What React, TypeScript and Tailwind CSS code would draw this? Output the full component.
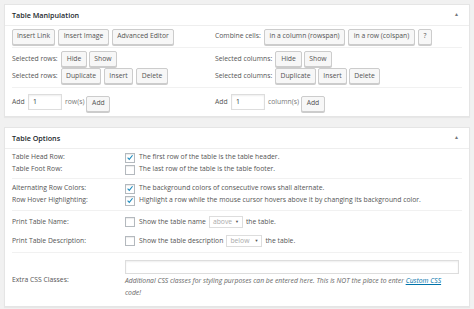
import React from 'react';

const Btn = ({ children, w }: { children: React.ReactNode; w?: string }) => (
  <span
    className={`inline-flex h-[16px] items-center justify-center whitespace-nowrap rounded-[2px] border border-[#cccccc] bg-[#f7f7f7] px-[2px] text-[6.8px] text-[#555] shadow-[0_1px_0_#cccccc] ${w ?? ''}`}
  >
    {children}
  </span>
);

const Check = ({ on }: { on?: boolean }) => (
  <span className="inline-flex h-[10px] w-[10px] shrink-0 items-center justify-center border border-[#b4b9be] bg-white shadow-[inset_0_1px_1px_rgba(0,0,0,0.08)]">
    {on && (
      <svg viewBox="0 0 10 10" className="h-[9px] w-[9px]">
        <path d="M2 5.2 L4.1 7.4 L8.2 2.2" fill="none" stroke="#1e8cbe" strokeWidth="1.4" />
      </svg>
    )}
  </span>
);

const Select = ({ value, w }: { value: string; w: string }) => (
  <span className={`mx-[3px] inline-flex h-[12px] items-center justify-between border border-[#dddddd] bg-white px-[3px] text-[#aaa] ${w}`}>
    <span>{value}</span>
    <span className="text-[4px] text-[#555]">▼</span>
  </span>
);

const Header = ({ title, h }: { title: string; h: string }) => (
  <div className={`flex items-center justify-between border-b border-[#eeeeee] px-[7px] ${h}`}>
    <span className="text-[7.2px] font-semibold text-[#23282d]">{title}</span>
    <span className="pr-[3px] text-[5px] text-[#72777c]">▲</span>
  </div>
);

const OptRow = ({ label, children }: { label: string; children: React.ReactNode }) => (
  <div className="grid h-[12px] grid-cols-[113px_1fr] items-center whitespace-nowrap">
    <span>{label}</span>
    <div className="flex items-center">{children}</div>
  </div>
);

const AddBox = ({ unit }: { unit: string }) => (
  <div className="flex items-center whitespace-nowrap">
    <span className="w-[16px]">Add</span>
    <span className="flex h-[16px] w-[34px] items-center border border-[#dddddd] pl-[4px] text-[#32373c] shadow-[inset_0_1px_2px_rgba(0,0,0,0.07)]">
      1
    </span>
    <span className="ml-[3px] mr-[2px] text-[#777]">{unit}</span>
    <span className="mt-[3px]">
      <Btn w="w-[24px]">Add</Btn>
    </span>
  </div>
);

export default function App() {
  return (
    <div
      className="min-h-screen bg-[#f1f1f1] pl-[4px] pt-[4px] text-[6.8px] text-[#555]"
      style={{ fontFamily: '"Open Sans", "Noto Sans", sans-serif' }}
    >
      {/* Table Manipulation */}
      <div className="w-[466px] border border-[#e5e5e5] bg-white shadow-[0_1px_1px_rgba(0,0,0,0.04)]">
        <Header title="Table Manipulation" h="h-[21px]" />
        <div className="px-[7px]">
          <div className="grid h-[22px] grid-cols-[203px_1fr] items-center whitespace-nowrap border-b border-[#f1f1f1]">
            <div className="flex gap-[3px]">
              <Btn w="w-[43px]">Insert Link</Btn>
              <Btn w="w-[51px]">Insert Image</Btn>
              <Btn w="w-[62px]">Advanced Editor</Btn>
            </div>
            <div className="flex items-center">
              <span className="w-[49px]">Combine cells:</span>
              <div className="flex gap-[3px]">
                <Btn w="w-[81px]">in a column (rowspan)</Btn>
                <Btn w="w-[67px]">in a row (colspan)</Btn>
                <Btn w="w-[14px]">?</Btn>
              </div>
            </div>
          </div>
          <div className="flex h-[40px] flex-col justify-center gap-[1px] whitespace-nowrap border-b border-[#f1f1f1]">
            <div className="grid grid-cols-[203px_1fr] items-center">
              <div className="flex items-center">
                <span className="w-[49px]">Selected rows:</span>
                <div className="flex gap-[2px]">
                  <Btn w="w-[26px]">Hide</Btn>
                  <Btn w="w-[28px]">Show</Btn>
                </div>
              </div>
              <div className="flex items-center">
                <span className="w-[60px]">Selected columns:</span>
                <div className="flex gap-[2px]">
                  <Btn w="w-[27px]">Hide</Btn>
                  <Btn w="w-[28px]">Show</Btn>
                </div>
              </div>
            </div>
            <div className="grid grid-cols-[203px_1fr] items-center">
              <div className="flex items-center">
                <span className="w-[49px]">Selected rows:</span>
                <div className="flex gap-[3px]">
                  <Btn w="w-[40px]">Duplicate</Btn>
                  <Btn w="w-[29px]">Insert</Btn>
                  <Btn w="w-[32px]">Delete</Btn>
                </div>
              </div>
              <div className="flex items-center">
                <span className="w-[60px]">Selected columns:</span>
                <div className="flex gap-[2px]">
                  <Btn w="w-[41px]">Duplicate</Btn>
                  <Btn w="w-[29px]">Insert</Btn>
                  <Btn w="w-[31px]">Delete</Btn>
                </div>
              </div>
            </div>
          </div>
          <div className="grid h-[28px] grid-cols-[203px_1fr] items-center">
            <AddBox unit="row(s)" />
            <AddBox unit="column(s)" />
          </div>
        </div>
      </div>

      {/* Table Options */}
      <div className="mt-[10px] w-[466px] border border-[#e5e5e5] bg-white shadow-[0_1px_1px_rgba(0,0,0,0.04)]">
        <Header title="Table Options" h="h-[21px]" />
        <div className="px-[7px]">
          <div className="flex h-[30px] flex-col justify-center border-b border-[#f1f1f1]">
            <OptRow label="Table Head Row:">
              <Check on />
              <span className="ml-[4px]">The first row of the table is the table header.</span>
            </OptRow>
            <OptRow label="Table Foot Row:">
              <Check />
              <span className="ml-[4px]">The last row of the table is the table footer.</span>
            </OptRow>
          </div>
          <div className="flex h-[32px] flex-col justify-center border-b border-[#f1f1f1]">
            <OptRow label="Alternating Row Colors:">
              <Check on />
              <span className="ml-[4px]">The background colors of consecutive rows shall alternate.</span>
            </OptRow>
            <OptRow label="Row Hover Highlighting:">
              <Check on />
              <span className="ml-[4px]">Highlight a row while the mouse cursor hovers above it by changing its background color.</span>
            </OptRow>
          </div>
          <div className="flex h-[42px] flex-col justify-center gap-[7px] border-b border-[#f1f1f1]">
            <OptRow label="Print Table Name:">
              <Check />
              <span className="ml-[4px]">Show the table name</span>
              <Select value="above" w="w-[34px]" />
              <span>the table.</span>
            </OptRow>
            <OptRow label="Print Table Description:">
              <Check />
              <span className="ml-[4px]">Show the table description</span>
              <Select value="below" w="w-[36px]" />
              <span>the table.</span>
            </OptRow>
          </div>
          <div className="grid h-[53px] grid-cols-[113px_1fr] items-center">
            <span className="mt-[2px]">Extra CSS Classes:</span>
            <div className="flex flex-col">
              <span className="h-[14px] w-[334px] border border-[#dddddd] shadow-[inset_0_1px_2px_rgba(0,0,0,0.07)]" />
              <p className="mt-[1px] w-[325px] italic leading-[12px] text-[#666]">
                Additional CSS classes for styling purposes can be entered here. This is NOT the place to enter{' '}
                <span className="text-[#0073aa] underline">Custom CSS</span> code!
              </p>
            </div>
          </div>
        </div>
      </div>
    </div>
  );
}
